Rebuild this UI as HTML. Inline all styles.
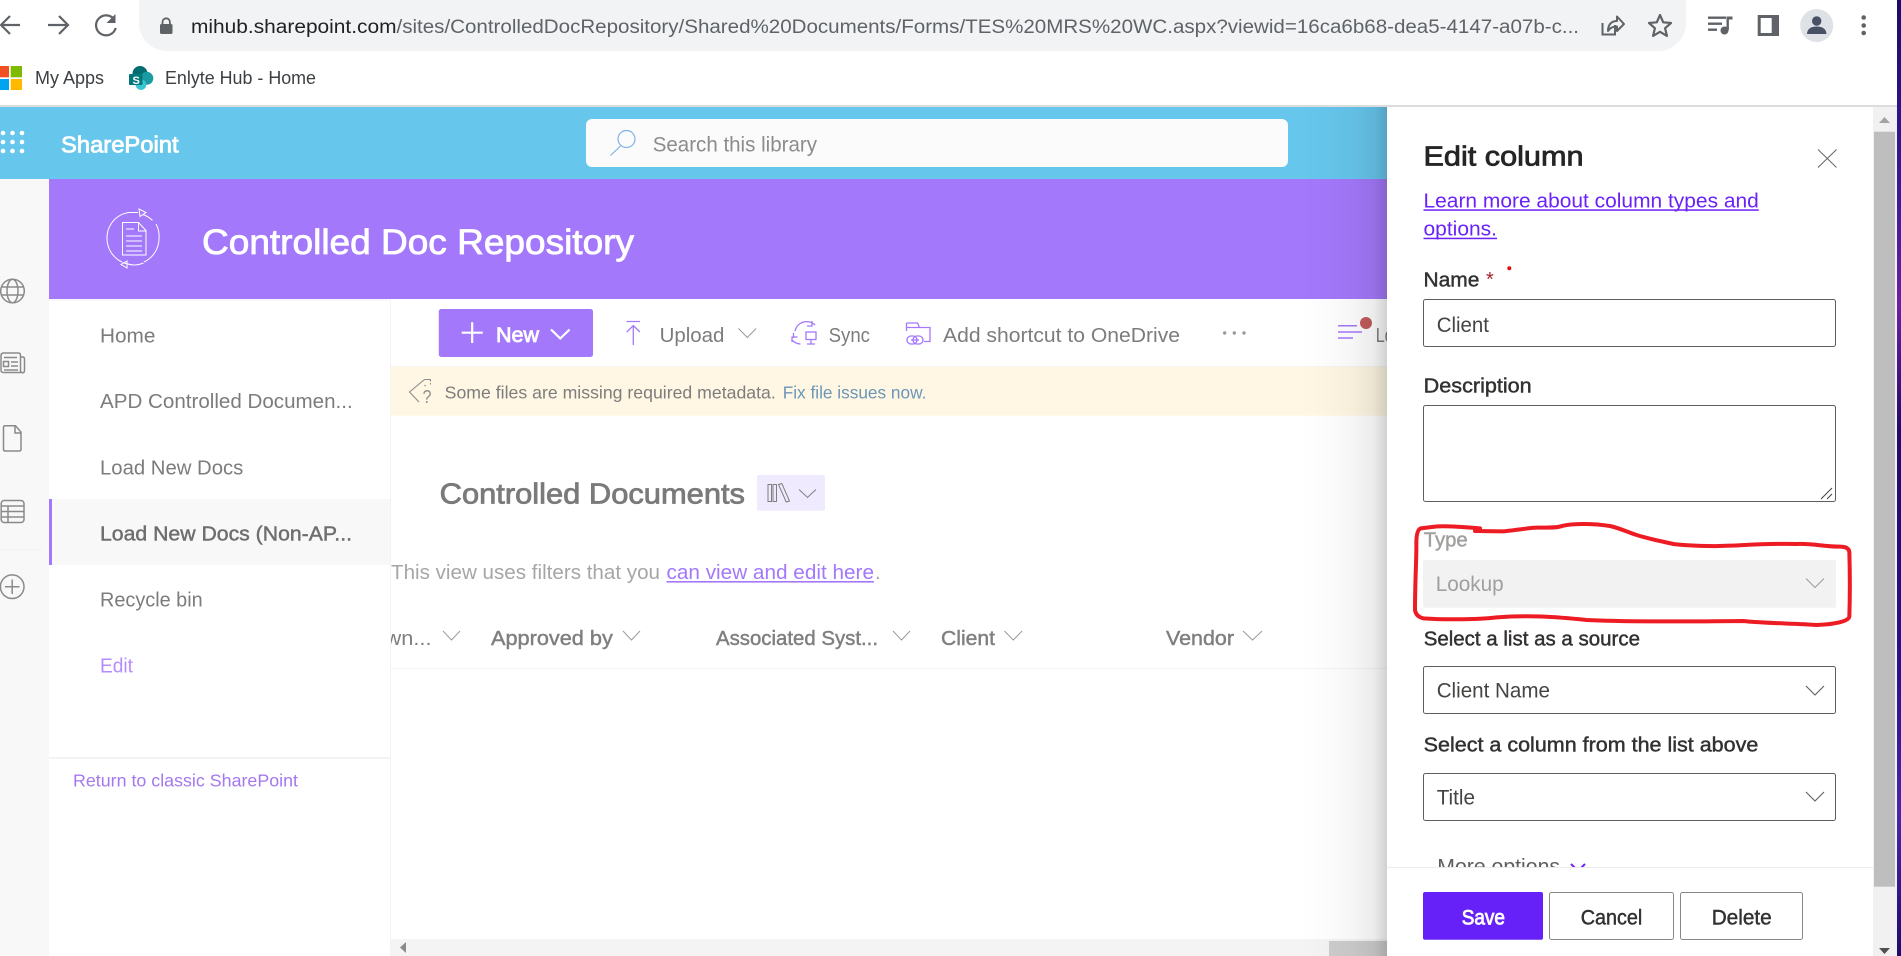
<!DOCTYPE html>
<html lang="en">
<head>
<meta charset="utf-8">
<title>Edit column - SharePoint</title>
<style>
html,body{margin:0;padding:0;background:#fff;overflow:hidden;width:1901px;height:956px}
svg{display:block;position:absolute;left:0;top:0}
text{font-family:"Liberation Sans",Arial,sans-serif;white-space:pre}
.s{stroke-width:.45px}
.b{stroke-width:.8px}
</style>
</head>
<body>
<svg width="1901" height="956" viewBox="0 0 1901 956" xmlns="http://www.w3.org/2000/svg">
<defs>
<linearGradient id="sh" x1="0" x2="1" y1="0" y2="0">
<stop offset="0" stop-color="#000" stop-opacity="0"/>
<stop offset=".3" stop-color="#000" stop-opacity=".012"/>
<stop offset=".6" stop-color="#000" stop-opacity=".035"/>
<stop offset=".85" stop-color="#000" stop-opacity=".08"/>
<stop offset="1" stop-color="#000" stop-opacity=".18"/>
</linearGradient>
<linearGradient id="wp" x1="0" x2="0" y1="0" y2="1">
<stop offset="0" stop-color="#1c0a6e"/>
<stop offset=".2" stop-color="#3a1a9c"/>
<stop offset=".32" stop-color="#6a20a8"/>
<stop offset=".45" stop-color="#23096f"/>
<stop offset=".7" stop-color="#2a1090"/>
<stop offset=".85" stop-color="#4a25b0"/>
<stop offset="1" stop-color="#1e0a70"/>
</linearGradient>
<clipPath id="c1"><rect x="391" y="600" width="200" height="60"/></clipPath>
</defs>

<!-- Chrome -->
<rect width="1901" height="107" fill="#fff"/>
<rect x="139" y="-30" width="1547" height="81" rx="28" fill="#f1f3f4"/>
<g fill="none" stroke="#5f6368" stroke-width="2.2">
<path d="M20 25H2M10 16l-9 9 9 9"/>
<path d="M48 25h19M59 16l9 9-9 9"/>
<path d="M114.5 20a10 10 0 1 0 1.2 8"/>
</g>
<path d="M115.5 14v9h-9z" fill="#5f6368"/>
<rect x="160" y="24" width="12.5" height="10" rx="1.5" fill="#5f6368"/>
<path d="M162.5 24v-2a3.7 3.7 0 0 1 7.4 0v2" fill="none" stroke="#5f6368" stroke-width="1.8"/>
<text x="191" y="33" font-size="19" fill="#202124" textLength="205.5" lengthAdjust="spacingAndGlyphs">mihub.sharepoint.com</text>
<text x="396.5" y="33" font-size="19" fill="#5f6368" textLength="1182.5" lengthAdjust="spacingAndGlyphs">/sites/ControlledDocRepository/Shared%20Documents/Forms/TES%20MRS%20WC.aspx?viewid=16ca6b68-dea5-4147-a07b-c...</text>
<g fill="none" stroke="#5f6368" stroke-width="2">
<path d="M1615 25v9.5h-12.5V23"/>
<path d="M1608 31c0-7 4-10 9-10v-4.5l7 7.500-7 7v-4.500c-4 0-7 1-9 4.500z" stroke-linejoin="round"/>
<path d="M1660 15l3.200 7.300 7.800.7-5.900 5.200 1.800 7.700-6.900-4.100-6.900 4.100 1.800-7.700-5.900-5.200 7.800-.7z" stroke-linejoin="round" stroke-width="2.200"/>
</g>
<g fill="#5f6368">
<rect x="1708" y="16.500" width="18" height="2.400"/>
<rect x="1708" y="22.500" width="14" height="2.400"/>
<rect x="1708" y="28.500" width="9" height="2.400"/>
<circle cx="1724.500" cy="30.500" r="4"/>
<path d="M1726.500 30V16.500h6v3h-3.600V30z"/>
<path d="M1757.700 15h21.300v21h-21.300zM1760.700 18v15h11v-15z" fill-rule="evenodd"/>
<circle cx="1863.700" cy="17.500" r="2.300"/><circle cx="1863.700" cy="25.500" r="2.300"/><circle cx="1863.700" cy="33" r="2.300"/>
</g>
<circle cx="1816.700" cy="25.500" r="16.500" fill="#dee1e6"/>
<circle cx="1816.700" cy="21" r="4.700" fill="#475267"/>
<path d="M1807 34c0-5 4-7.500 9.700-7.500s9.700 2.500 9.700 7.500z" fill="#475267"/>

<!-- Bookmarks -->
<rect x="0" y="66" width="9" height="11.300" fill="#f25022"/>
<rect x="10.700" y="66" width="11.300" height="11.300" fill="#7fba00"/>
<rect x="0" y="79" width="9" height="11" fill="#00a4ef"/>
<rect x="10.700" y="79" width="11.300" height="11" fill="#ffb900"/>
<text x="35" y="84" font-size="18" fill="#3c4043" textLength="69" lengthAdjust="spacingAndGlyphs">My Apps</text>
<circle cx="140" cy="73.500" r="7.500" fill="#036c70"/>
<circle cx="146.800" cy="78.300" r="6.500" fill="#1a9ba1"/>
<circle cx="141" cy="84.700" r="5.300" fill="#37c6d0"/>
<rect x="129" y="74" width="13.500" height="11" rx="1" fill="#03787c"/>
<text x="132.500" y="84" font-size="11" font-weight="bold" fill="#fff">S</text>
<text x="165" y="84" font-size="18" fill="#3c4043" textLength="151" lengthAdjust="spacingAndGlyphs">Enlyte Hub - Home</text>
<rect x="0" y="105" width="1897" height="2" fill="#dcdcdc"/>

<!-- Suite bar -->
<rect x="0" y="107" width="1387" height="72" fill="#66c6ec"/>
<g fill="#fff">
<circle cx="3" cy="133" r="2.300"/><circle cx="12.500" cy="133" r="2.300"/><circle cx="22" cy="133" r="2.300"/>
<circle cx="3" cy="142" r="2.300"/><circle cx="12.500" cy="142" r="2.300"/><circle cx="22" cy="142" r="2.300"/>
<circle cx="3" cy="151" r="2.300"/><circle cx="12.500" cy="151" r="2.300"/><circle cx="22" cy="151" r="2.300"/>
</g>
<text class="b" x="61" y="152.700" font-size="23" fill="#fff" stroke="#fff" textLength="117.600" lengthAdjust="spacingAndGlyphs">SharePoint</text>
<rect x="586" y="119" width="702" height="48" rx="6" fill="#fbfbfb"/>
<circle cx="626.500" cy="139" r="8.500" fill="none" stroke="#7fb2e6" stroke-width="1.200"/>
<path d="M620.500 146l-10 9.500" stroke="#7fb2e6" stroke-width="1.200" fill="none"/>
<text x="652.700" y="151.700" font-size="21" fill="#8c8c8c" textLength="164.300" lengthAdjust="spacingAndGlyphs">Search this library</text>

<!-- Left rail -->
<rect x="0" y="179" width="49" height="777" fill="#f8f8f8"/>
<g fill="none" stroke="#8a8a8a" stroke-width="1.500">
<circle cx="12.500" cy="291" r="11.800"/>
<ellipse cx="12.500" cy="291" rx="5.500" ry="11.800"/>
<path d="M1.500 287h22M1.500 295h22"/>
<path d="M1 355.500q0-2.500 2.500-2.500h15q2 0 2 2.500v15q0 2 2 2H3.500q-2.500 0-2.500-2.500zM20.500 357h2q2 0 2 2v11q0 3-2 3"/>
<rect x="3.500" y="361.500" width="5" height="5"/>
<path d="M4 357.500h13M11 362h7M11 366h7M4 370h14"/>
<path d="M5 425.700h10.500l5.500 6.500v17q0 1.800-1.800 1.800H5q-1.500 0-1.500-1.800v-21.700q0-1.800 1.500-1.800zM15 426v7h6"/>
<rect x="1.200" y="500.500" width="22.800" height="22" rx="3"/>
<path d="M1.200 506h22.800M1.200 511.500h22.800M1.200 517h22.800M8 506v16.500"/>
<circle cx="12.200" cy="586.700" r="11.800"/>
<path d="M12.200 579.500v14.500M5 586.700h14.500"/>
</g>
<rect x="0" y="549.500" width="42" height="1" fill="#efefef"/>

<!-- Site header -->
<rect x="49" y="179" width="1338" height="120" fill="#a378fb"/>
<g fill="none" stroke="#fff" stroke-width="1">
<path d="M143 214.500a26 26 0 0 1 9.500 6M156 224a26 26 0 0 1 3 15 26 26 0 0 1-15 23M122 262a26 26 0 0 1-15-23 26 26 0 0 1 4-15 26 26 0 0 1 18-11.500h9"/>
<path d="M122.500 262.500q6 2 11 2.500 5 0 10-2"/>
<path d="M139 209l7 3.500-6 4zM127 261l-6 3.500 6 3.500z"/>
<path d="M122.500 222.500h16l7.500 8v24.500h-23.500zM138.500 222.500v8.500h7.500"/>
<path d="M126 229h8M126 236h16M126 241h16M126 246h16M126 251h16"/>
</g>
<text class="b" x="202" y="254" font-size="35" fill="#fff" stroke="#fff" textLength="432" lengthAdjust="spacingAndGlyphs">Controlled Doc Repository</text>

<!-- Nav -->
<rect x="49" y="299" width="342" height="2" fill="#f8f8f8"/>
<rect x="390" y="299" width="1" height="657" fill="#f3f3f3"/>
<rect x="49" y="499" width="341" height="66" fill="#f8f8f8"/>
<rect x="49" y="499" width="3" height="66" fill="#a378fb"/>
<g font-size="20.500" fill="#7c7c7c">
<text x="100" y="342.700" textLength="55.400" lengthAdjust="spacingAndGlyphs">Home</text>
<text x="100" y="408" textLength="252.700" lengthAdjust="spacingAndGlyphs">APD Controlled Documen...</text>
<text x="100" y="474.300" textLength="143.300" lengthAdjust="spacingAndGlyphs">Load New Docs</text>
<text class="s" x="100" y="540.700" fill="#6e6e6e" stroke="#6e6e6e" textLength="252" lengthAdjust="spacingAndGlyphs">Load New Docs (Non-AP...</text>
<text x="100" y="606.700" textLength="102.700" lengthAdjust="spacingAndGlyphs">Recycle bin</text>
<text x="100" y="672.300" fill="#b48cff" textLength="33" lengthAdjust="spacingAndGlyphs">Edit</text>
</g>
<rect x="49" y="757" width="341" height="2" fill="#f3f3f3"/>
<text x="73" y="786.700" font-size="17.500" fill="#a378f0" textLength="225" lengthAdjust="spacingAndGlyphs">Return to classic SharePoint</text>

<!-- Toolbar -->
<rect x="438.800" y="309" width="154.200" height="48" rx="2.500" fill="#a378fb"/>
<path d="M472.200 322.300V343M461.700 332.700h21.100" stroke="#fff" stroke-width="2.200" fill="none"/>
<text class="b" x="496" y="342" font-size="21" fill="#fff" stroke="#fff" textLength="43" lengthAdjust="spacingAndGlyphs">New</text>
<path d="M551 329.500l9.300 9 9.300-9" stroke="#fff" stroke-width="2.200" fill="none"/>
<g fill="none" stroke="#a378fb" stroke-width="1.300">
<path d="M626.600 321.500h13.400M633.300 345v-19M626.800 332l6.500-6.500 6.500 6.500"/>
<path d="M795 331a12 12 0 0 1 20-6M812 321v5h-5M792.500 340.500a12 12 0 0 0 8 3.500M792 342v-5h5.500M793.500 333v5"/>
<rect x="806" y="332" width="10" height="7.500"/>
<path d="M811 339.500v4M807 344h8"/>
<path d="M906.500 323h11l2 4.500h10.500v14h-6M906.500 323v8M906.500 327.500h13"/>
<rect x="907" y="336" width="10" height="8" rx="4"/>
<rect x="913" y="336" width="10" height="8" rx="4"/>
<path d="M911 340h8"/>
</g>
<g font-size="20.500" fill="#7c7c7c">
<text x="659.600" y="342" textLength="64.800" lengthAdjust="spacingAndGlyphs">Upload</text>
<text x="828.600" y="342" textLength="41.400" lengthAdjust="spacingAndGlyphs">Sync</text>
<text x="943" y="342" textLength="237" lengthAdjust="spacingAndGlyphs">Add shortcut to OneDrive</text>
<text x="1375.700" y="342" textLength="18" lengthAdjust="spacingAndGlyphs">Lo</text>
</g>
<path d="M738.500 328.500l8.800 9 8.800-9" fill="none" stroke="#9a9a9a" stroke-width="1"/>
<g fill="#9a9a9a"><circle cx="1224.700" cy="333" r="1.700"/><circle cx="1234.300" cy="333" r="1.700"/><circle cx="1244" cy="333" r="1.700"/></g>
<g stroke="#a378fb" stroke-width="1.500"><path d="M1338 325.700h19M1338 332h24M1338 338h15"/></g>
<circle cx="1366" cy="323" r="6" fill="#c25c5c"/>

<rect x="391" y="366" width="996" height="1" fill="#f3f3f3"/>
<rect x="391" y="366.700" width="996" height="49" fill="#fff7e3"/>
<g fill="none" stroke="#8e8e8e" stroke-width="1.100">
<path d="M431 379.500h-6.500L409.500 392l9.500 10"/>
<path d="M430.500 380v5" stroke-dasharray="1.500 1.500"/>
</g>
<text x="422.500" y="403" font-size="18" fill="#8e8e8e" textLength="9" lengthAdjust="spacingAndGlyphs">?</text>
<circle cx="425" cy="385.500" r=".8" fill="#8e8e8e"/>
<text x="444.700" y="398.300" font-size="17.500" fill="#7d7d7d" textLength="331.100" lengthAdjust="spacingAndGlyphs">Some files are missing required metadata.</text>
<text x="782.700" y="398.300" font-size="17.500" fill="#6b96b8" textLength="143.700" lengthAdjust="spacingAndGlyphs">Fix file issues now.</text>

<!-- Library title -->
<text class="b" x="439.700" y="503.300" font-size="29" fill="#7a7a7a" stroke="#7a7a7a" textLength="305.300" lengthAdjust="spacingAndGlyphs">Controlled Documents</text>
<rect x="757" y="475" width="68" height="35.700" rx="2" fill="#efeafd"/>
<g fill="none" stroke="#7f7f7f" stroke-width="1">
<rect x="768" y="484.500" width="3.500" height="17"/>
<rect x="773" y="484.500" width="3.500" height="17"/>
<path d="M778.500 484.500l3.300-1 7.700 17.500-3.300 1z"/>
<path d="M799 489.500l8.500 8 8.500-8"/>
</g>
<text x="391" y="579" font-size="20.500" fill="#a6a6a6" textLength="269" lengthAdjust="spacingAndGlyphs">This view uses filters that you</text>
<text x="666.500" y="579" font-size="20.500" fill="#a378fb" textLength="207.500" lengthAdjust="spacingAndGlyphs">can view and edit here</text>
<rect x="666.500" y="581" width="207.500" height="1.600" fill="#a378fb"/>
<text x="875" y="579" font-size="20.500" fill="#a6a6a6">.</text>

<!-- Column header -->
<g font-size="20.500" fill="#7f7f7f" class="hd">
<text clip-path="url(#c1)" x="385.500" y="645" textLength="46" lengthAdjust="spacingAndGlyphs">wn...</text>
<text class="s" stroke="#7f7f7f" x="491" y="645" textLength="121.800" lengthAdjust="spacingAndGlyphs">Approved by</text>
<text class="s" stroke="#7f7f7f" x="716" y="645" textLength="162" lengthAdjust="spacingAndGlyphs">Associated Syst...</text>
<text class="s" stroke="#7f7f7f" x="941" y="645" textLength="54" lengthAdjust="spacingAndGlyphs">Client</text>
<text class="s" stroke="#7f7f7f" x="1166" y="645" textLength="68" lengthAdjust="spacingAndGlyphs">Vendor</text>
</g>
<g fill="none" stroke="#9a9a9a" stroke-width="1">
<path d="M443 631l8.500 9 8.500-9M623 631l8.500 9 8.500-9M893 631l8.500 9 8.500-9M1004.500 631l8.800 9 8.800-9M1243 631l9.500 9 9.500-9"/>
</g>
<rect x="391" y="668" width="996" height="1" fill="#f3f3f3"/>

<!-- Bottom scrollbar -->
<rect x="391" y="939" width="996" height="17" fill="#f4f4f4"/>
<rect x="1329" y="941" width="58" height="15" fill="#cdcdcd"/>
<path d="M406 942v11l-6-5.500z" fill="#8a8a8a"/>

<!-- Panel shadow -->
<rect x="1300" y="107" width="87" height="849" fill="url(#sh)"/>

<!-- Panel -->
<rect x="1387" y="107" width="486" height="849" fill="#fff"/>
<text class="b" x="1423.500" y="165.700" font-size="28" fill="#252525" stroke="#252525" textLength="160" lengthAdjust="spacingAndGlyphs">Edit column</text>
<path d="M1818 149.500l18.500 18M1836.500 149.500l-18.500 18" stroke="#666" stroke-width="1" fill="none"/>
<text x="1423.500" y="207.300" font-size="20.500" fill="#6a22f8" textLength="335.300" lengthAdjust="spacingAndGlyphs">Learn more about column types and</text>
<rect x="1423.500" y="209.300" width="335.300" height="1.500" fill="#6a22f8"/>
<text x="1423.500" y="235.700" font-size="20.500" fill="#6a22f8" textLength="73.500" lengthAdjust="spacingAndGlyphs">options.</text>
<rect x="1423.500" y="237.700" width="73.500" height="1.500" fill="#6a22f8"/>

<g font-size="20.500" fill="#323130">
<text class="s" stroke="#323130" x="1423.500" y="286.700" textLength="55.900" lengthAdjust="spacingAndGlyphs">Name</text>
<text x="1486" y="286" font-size="20" fill="#a4262c">*</text>
<text class="s" stroke="#323130" x="1423.700" y="392.700" textLength="108" lengthAdjust="spacingAndGlyphs">Description</text>
<text class="s" stroke="#a19f9d" fill="#a19f9d" x="1423.700" y="546.700" textLength="44" lengthAdjust="spacingAndGlyphs">Type</text>
<text class="s" stroke="#323130" x="1423.700" y="645.700" textLength="216.300" lengthAdjust="spacingAndGlyphs">Select a list as a source</text>
<text class="s" stroke="#323130" x="1423.700" y="751.700" textLength="334.600" lengthAdjust="spacingAndGlyphs">Select a column from the list above</text>
</g>
<circle cx="1509.300" cy="268.300" r="2" fill="#e01010"/>

<g fill="#fff" stroke="#605e5c" stroke-width="1">
<rect x="1423.500" y="299.500" width="412" height="47" rx="2"/>
<rect x="1423.500" y="405.500" width="412" height="96" rx="2"/>
<rect x="1423.500" y="666.500" width="412" height="47" rx="2"/>
<rect x="1423.500" y="773.500" width="412" height="47" rx="2"/>
</g>
<path d="M1821 499l11-11M1827 499l5-5" stroke="#444" stroke-width="1" fill="none"/>
<rect x="1423" y="560" width="413" height="47.700" rx="2" fill="#f2f2f2"/>
<g font-size="21" fill="#454443">
<text x="1436.700" y="332" textLength="52.300" lengthAdjust="spacingAndGlyphs">Client</text>
<text x="1435.700" y="591" fill="#a19f9d" textLength="68" lengthAdjust="spacingAndGlyphs">Lookup</text>
<text x="1436.700" y="697.700" textLength="113.300" lengthAdjust="spacingAndGlyphs">Client Name</text>
<text x="1436.700" y="804.700" textLength="38.300" lengthAdjust="spacingAndGlyphs">Title</text>
<text x="1437.300" y="873.500" fill="#605e5c" textLength="122.700" lengthAdjust="spacingAndGlyphs">More options</text>
</g>
<g fill="none" stroke="#605e5c" stroke-width="1.100">
<path d="M1806 578.500l9 9 9-9" stroke="#a19f9d"/>
<path d="M1806 686l9 9 9-9M1806 792l9 9 9-9"/>
</g>
<path d="M1571 864l7 7 7-7" fill="none" stroke="#6a22f8" stroke-width="2"/>

<!-- Red ink -->
<path transform="translate(1380 280) scale(.33333)" fill="none" stroke="#ed1c24" stroke-width="12" stroke-linecap="round" stroke-linejoin="round"
d="M300 745C250 741 190 736 165 740L122 745Q109 750 109 790C110 830 105 900 105 990Q108 1010 130 1015C200 1020 300 1018 350 1012C450 1005 520 1010 620 1020C720 1025 900 1025 1090 1023C1150 1030 1250 1030 1310 1035C1360 1033 1405 1025 1408 1010C1410 950 1410 880 1408 815Q1405 800 1380 800C1330 800 1300 790 1250 792C1150 790 1100 795 1050 797C1000 800 920 797 880 792C850 785 800 775 770 765C740 755 720 745 690 738C640 730 580 730 550 737C530 745 500 742 470 743C430 745 400 752 370 754L285 753"/>

<!-- Panel footer -->
<rect x="1387" y="867" width="486" height="89" fill="#fff"/>
<rect x="1387" y="867" width="486" height="1" fill="#edebe9"/>
<rect x="1423" y="892" width="120" height="47.700" rx="2" fill="#6521f7"/>
<text class="b" x="1461.700" y="924.300" font-size="21" fill="#fff" stroke="#fff" textLength="43.300" lengthAdjust="spacingAndGlyphs">Save</text>
<rect x="1549.500" y="892.500" width="124" height="47" rx="2" fill="#fff" stroke="#8a8886"/>
<text class="s" x="1580.700" y="924.300" font-size="21" fill="#323130" stroke="#323130" textLength="61.600" lengthAdjust="spacingAndGlyphs">Cancel</text>
<rect x="1680.500" y="892.500" width="122" height="47" rx="2" fill="#fff" stroke="#8a8886"/>
<text class="s" x="1711.700" y="924.300" font-size="21" fill="#323130" stroke="#323130" textLength="60" lengthAdjust="spacingAndGlyphs">Delete</text>

<!-- Vertical scrollbar -->
<rect x="1873" y="107" width="24" height="849" fill="#f1f1f1"/>
<rect x="1874" y="131.700" width="21" height="755" fill="#bebebe"/>
<path d="M1884.500 117l-5.500 6h11z" fill="#a3a3a3"/>
<path d="M1879 948h11l-5.500 6z" fill="#505050"/>

<!-- Wallpaper strip -->
<rect x="1897" y="0" width="4" height="956" fill="url(#wp)"/>
</svg>
</body>
</html>
